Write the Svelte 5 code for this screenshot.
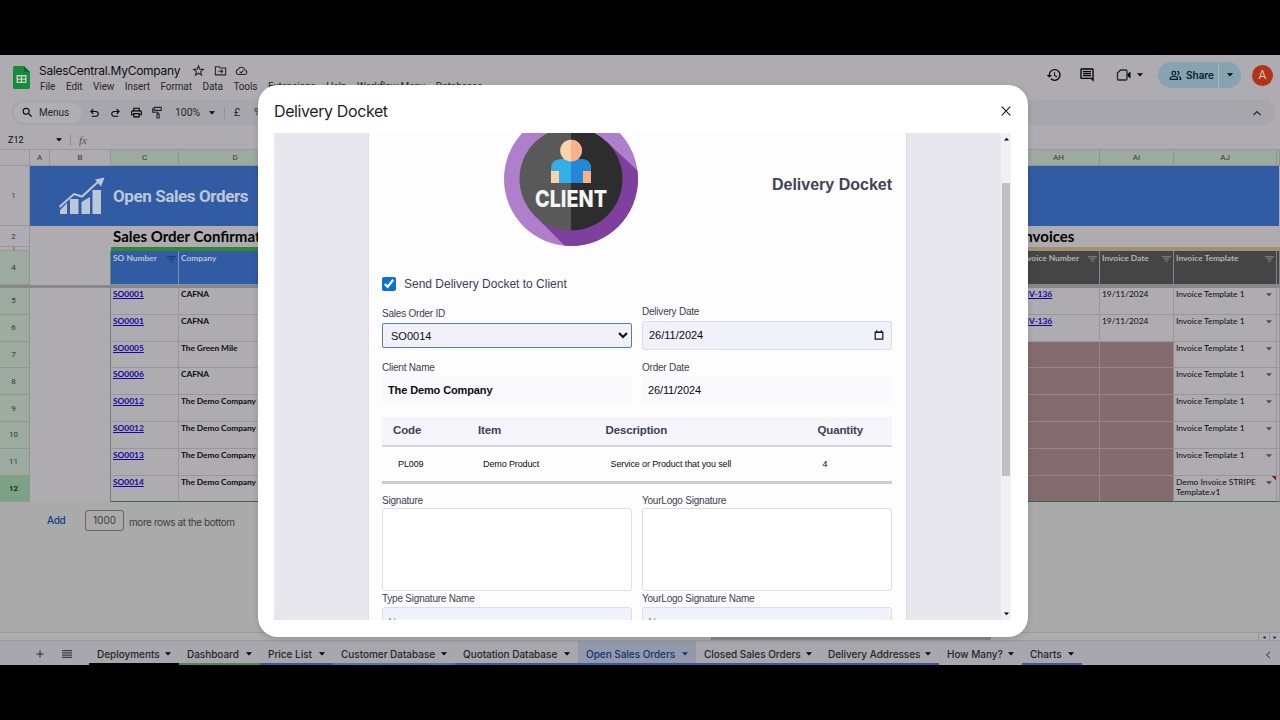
<script>
    let menus = ["File", "Edit", "View", "Insert", "Format", "Data", "Tools", "Extensions", "Help", "Workflow Menu", "Databases"];

    let orders = [
        { row: 5, so: "SO0001", company: "CAFNA", invoice: "INV-136", date: "19/11/2024", template: "Invoice Template 1" },
        { row: 6, so: "SO0001", company: "CAFNA", invoice: "INV-136", date: "19/11/2024", template: "Invoice Template 1" },
        { row: 7, so: "SO0005", company: "The Green Mile", template: "Invoice Template 1" },
        { row: 8, so: "SO0006", company: "CAFNA", template: "Invoice Template 1" },
        { row: 9, so: "SO0012", company: "The Demo Company", template: "Invoice Template 1" },
        { row: 10, so: "SO0012", company: "The Demo Company", template: "Invoice Template 1" },
        { row: 11, so: "SO0013", company: "The Demo Company", template: "Invoice Template 1" },
        { row: 12, so: "SO0014", company: "The Demo Company", template: "Demo Invoice STRIPE Template.v1" },
    ];

    let tabs = [
        { name: "Deployments", width: 90, color: "#000" },
        { name: "Dashboard", width: 81, color: "#4f8a55" },
        { name: "Price List", width: 73, color: "#3a5a9c" },
        { name: "Customer Database", width: 122, color: "#5277ad" },
        { name: "Quotation Database", width: 123, color: "#3a5a9c" },
        { name: "Open Sales Orders", width: 118, color: "#3a5a9c", active: true },
        { name: "Closed Sales Orders", width: 124, color: "#3a5a9c" },
        { name: "Delivery Addresses", width: 119, color: "#3a5a9c" },
        { name: "How Many?", width: 83, color: "transparent" },
        { name: "Charts", width: 60, color: "#3a5a9c" },
    ];

    let send_docket = true;
    let sales_order = "SO0014";
</script>

{#snippet caret()}
    <svg class="caret" viewBox="0 0 6 4"><path d="M0 .3h6L3 3.6z" /></svg>
{/snippet}

{#snippet filter()}
    <svg class="filter" viewBox="0 0 9 6"><path d="M0 .8h9M1.8 3h5.4M3.5 5.2h2" /></svg>
{/snippet}

<div class="screen">
    <div class="app">
        <header>
            <svg class="logo" viewBox="0 0 17 23">
                <path d="M1.500 0H11l6 6v15.500a1.500 1.500 0 0 1-1.500 1.500h-14A1.500 1.500 0 0 1 0 21.500v-20A1.500 1.500 0 0 1 1.500 0z" fill="#178a3c" />
                <path d="M11 0l6 6h-6z" fill="#0d6a2b" />
                <path d="M3.500 9h10v8h-10zM4.900 10.400v2h2.900v-2zM9.200 10.400v2h2.900v-2zM4.900 13.700v2h2.900v-2zM9.200 13.700v2h2.900v-2z" fill="#c3d3c6" fill-rule="evenodd" />
            </svg>
            <div class="doc">
                <div class="title">
                    <span>SalesCentral.MyCompany</span>
                    <svg class="line" viewBox="0 0 24 24"><path d="M12 3.500l2.500 6 6.500.5-5 4.200 1.600 6.300L12 17l-5.600 3.500L8 14.200 3 10l6.500-.5z" /></svg>
                    <svg class="line" viewBox="0 0 24 24"><path d="M2.500 5h7l2 2.500h10V20h-19zM8 13.500h7.500M13 10.500l3 3-3 3" /></svg>
                    <svg class="line" viewBox="0 0 24 24"><path d="M7 19.500a5 5 0 0 1-.8-9.900A6.300 6.300 0 0 1 18 11a4.300 4.300 0 0 1 .5 8.500zM8.500 14l2.500 2.500 4.500-4.500" /></svg>
                </div>
                <nav>
                    {#each menus as menu}
                        <span>{menu}</span>
                    {/each}
                </nav>
            </div>
            <div class="actions">
                <svg class="history" viewBox="0 0 24 24"><path d="M13 3a9 9 0 0 0-9 9H1l3.890 3.890.07.14L9 12H6c0-3.870 3.130-7 7-7s7 3.130 7 7-3.130 7-7 7c-1.930 0-3.680-.79-4.940-2.060l-1.420 1.420A8.954 8.954 0 0 0 13 21a9 9 0 0 0 0-18zm-1 5v5l4.280 2.540.72-1.210-3.500-2.080V8H12z" /></svg>
                <svg class="comment" viewBox="0 0 24 24"><path d="M22 4c0-1.100-.9-2-2-2H4c-1.100 0-2 .9-2 2v12c0 1.100.9 2 2 2h14l4 4zM20 4v13.170L18.830 16H4V4h16zM6 12h12v2H6zm0-3h12v2H6zm0-3h12v2H6z" /></svg>
                <svg class="meet" viewBox="0 0 16 14"><path class="outline" d="M4.500 2H10q1 0 1 1v8q0 1-1 1H2.500q-1 0-1-1V5z" /><path d="M11.500 6l3-2.500v7l-3-2.500z" /></svg>
                {@render caret()}
                <div class="share">
                    <svg viewBox="0 0 24 24"><path d="M9 4.500a3.500 3.500 0 1 0 0 7 3.500 3.500 0 0 0 0-7zM2.500 19v-2c0-2 4-3.200 6.500-3.200s6.500 1.200 6.500 3.200v2zM15 4.500a3.500 3.500 0 0 1 0 7M18 14c2 .7 3.500 1.700 3.500 3v2h-2.500" /></svg>
                    <span>Share</span>
                    <i></i>
                    {@render caret()}
                </div>
                <div class="avatar">A</div>
            </div>
        </header>

        <div class="toolbar">
            <div class="search">
                <svg viewBox="0 0 24 24"><path d="M15.500 14h-.79l-.28-.27A6.471 6.471 0 0 0 16 9.500 6.500 6.500 0 1 0 9.500 16c1.610 0 3.090-.59 4.230-1.570l.27.28v.79l5 4.990L20.490 19l-4.990-5zm-6 0C7.010 14 5 11.990 5 9.500S7.010 5 9.500 5 14 7.010 14 9.500 11.990 14 9.500 14z" /></svg>
                Menus
            </div>
            <div class="tools">
                <svg viewBox="0 0 24 24"><path d="M7 20v-2h7.100q1.575 0 2.738-1T18 14.500q0-1.500-1.162-2.500T14.100 11H7.800l2.600 2.600L9 15l-5-5 5-5 1.400 1.400L7.800 9h6.300q2.425 0 4.163 1.575T20 14.500q0 2.350-1.737 3.925T14.100 20z" /></svg>
                <svg class="flip" viewBox="0 0 24 24"><path d="M7 20v-2h7.100q1.575 0 2.738-1T18 14.500q0-1.500-1.162-2.500T14.100 11H7.800l2.600 2.600L9 15l-5-5 5-5 1.400 1.400L7.800 9h6.300q2.425 0 4.163 1.575T20 14.500q0 2.350-1.737 3.925T14.100 20z" /></svg>
                <svg viewBox="0 0 24 24"><path d="M19 8h-1V3H6v5H5c-1.660 0-3 1.340-3 3v6h4v4h12v-4h4v-6c0-1.660-1.340-3-3-3zM8 5h8v3H8V5zm8 12v2H8v-4h8v2zm2-2v-2H6v2H4v-4c0-.55.45-1 1-1h14c.55 0 1 .45 1 1v4h-2z" /></svg>
                <svg class="line" viewBox="0 0 24 24"><path d="M6 2.500h13v5.500H6zM6 5H3v6.500h10V15M11 15h4v7h-4z" /></svg>
            </div>
            <span class="zoom">100%</span>
            {@render caret()}
            <i></i>
            <span class="currency">£</span>
            <span>%</span>
            <svg class="fold" viewBox="0 0 10 8"><path d="M1.500 6L5 2.500 8.500 6" /></svg>
        </div>

        <div class="formula">
            <span class="cell_name">Z12</span>
            {@render caret()}
            <i></i>
            <em>fx</em>
        </div>

        <div class="sheet">
            <div class="pane left">
                <div class="row letters">
                    <span class="num"></span><span class="a">A</span><span class="b">B</span><span class="c sel">C</span><span class="d sel">D</span>
                </div>
                <div class="row banner">
                    <span class="num">1</span>
                    <div class="banner_fill">
                        <svg viewBox="0 0 46 38">
                            <path d="M1 37v-4l7-7v11zM11 22h8.500v15H11zM22.500 25l8.500-5v17h-8.500zM33.500 13H42v24h-8.500z" />
                            <path class="trend" d="M.5 30L15 17l8 2.500L40 4" />
                            <path d="M36 2.500L45.500.5 42 9.500z" />
                        </svg>
                        <b>Open Sales Orders</b>
                    </div>
                </div>
                <div class="row heading"><span class="num">2</span><b class="from_c">Sales Order Confirmations</b></div>
                <div class="row thin"><span class="num"><small>3</small></span><span class="strip green"></span></div>
                <div class="row columns">
                    <span class="num sel">4</span><span class="gap"></span>
                    <span class="c">SO Number {@render filter()}</span><span class="d">Company</span>
                </div>
                <div class="freeze"></div>
                {#each orders as order}
                    <div class="row order" class:last={order.row === 12}>
                        <span class="num sel" class:current={order.row === 12}>{order.row}</span><span class="gap"></span>
                        <span class="c"><a href="#so">{order.so}</a></span><b class="d">{order.company}</b>
                    </div>
                {/each}
                <div class="more"><span class="add">Add</span><span class="count">1000</span><span class="hint">more rows at the bottom</span></div>
            </div>

            <div class="pane right">
                <div class="row letters"><span class="ah sel">AH</span><span class="ai sel">AI</span><span class="aj sel">AJ</span><span class="end sel"></span></div>
                <div class="row banner"><div class="banner_fill"></div></div>
                <div class="row heading"><b>Invoices</b></div>
                <div class="row thin"><span class="strip tan"></span></div>
                <div class="row columns dark">
                    <span class="ah">Invoice Number {@render filter()}</span>
                    <span class="ai">Invoice Date {@render filter()}</span>
                    <span class="aj">Invoice Template {@render filter()}</span>
                    <span class="end"></span>
                </div>
                <div class="freeze"></div>
                {#each orders as order}
                    <div class="row order" class:last={order.row === 12}>
                        <span class="ah" class:missing={!order.invoice}>
                            {#if order.invoice}<a href="#inv">{order.invoice}</a>{/if}
                        </span>
                        <span class="ai" class:missing={!order.date}>{order.date ?? ""}</span>
                        <span class="aj" class:flagged={order.row === 12}>{order.template}{@render caret()}</span>
                        <span class="end"></span>
                    </div>
                {/each}
            </div>
        </div>

        <div class="hscroll"><span class="thumb"></span><span class="arrow">◂</span><span class="arrow">▸</span></div>

        <footer>
            <svg class="plus" viewBox="0 0 8 8"><path d="M4 .5v7M.5 4h7" /></svg>
            <svg class="list" viewBox="0 0 10 8"><path d="M0 .7h10M0 2.900h10M0 5.100h10M0 7.300h10" /></svg>
            {#each tabs as tab}
                <div class="tab" class:active={tab.active} style="width:{tab.width}px;border-color:{tab.color}">
                    {tab.name}
                    {@render caret()}
                </div>
            {/each}
            <svg class="side" viewBox="0 0 6 8"><path d="M5 .8L1.500 4 5 7.200" /></svg>
        </footer>
    </div>

    <div class="modal">
        <div class="modal_head">
            <h1>Delivery Docket</h1>
            <svg viewBox="0 0 10 10"><path d="M.7.7l8.600 8.600M9.300.7L.7 9.300" /></svg>
        </div>
        <div class="frame">
            <div class="paper">
                <div class="docket_head">
                    <svg class="client" viewBox="0 0 134 134">
                        <defs>
                            <clipPath id="disc"><circle cx="67" cy="67" r="67" /></clipPath>
                            <clipPath id="half"><path d="M67 0h67v134H67z" /></clipPath>
                        </defs>
                        <g clip-path="url(#disc)">
                            <path d="M0 0h134v134H0z" fill="#b07fcb" />
                            <path d="M103 30l31 29v75H61L30 103z" fill="#7f3f9f" />
                        </g>
                        <circle cx="67" cy="67" r="51.500" fill="#595959" />
                        <circle cx="67" cy="67" r="51.500" fill="#2d2d2d" clip-path="url(#half)" />
                        <path d="M47 57q0-10 10-10h20q10 0 10 10v14H47z" fill="#34aee4" />
                        <path d="M67 47h10q10 0 10 10v14H67z" fill="#2287d8" />
                        <path d="M47 59h8v12h-8z" fill="#fdd3aa" />
                        <path d="M79 59h8v12h-8z" fill="#fbb186" />
                        <circle cx="67" cy="38.500" r="10.800" fill="#fdd3aa" />
                        <circle cx="67" cy="38.500" r="10.800" fill="#fbb186" clip-path="url(#half)" />
                        <text x="67" y="95" text-anchor="middle" textLength="72" lengthAdjust="spacingAndGlyphs">CLIENT</text>
                    </svg>
                    <h2>Delivery Docket</h2>
                </div>

                <label class="send">
                    <input type="checkbox" bind:checked={send_docket} />
                    Send Delivery Docket to Client
                </label>

                <div class="fields">
                    <div class="field order_id">
                        <label for="so">Sales Order ID</label>
                        <select id="so" bind:value={sales_order}>
                            {#each ["SO0012", "SO0013", "SO0014"] as id}
                                <option>{id}</option>
                            {/each}
                        </select>
                    </div>
                    <div class="field">
                        <span class="label">Delivery Date</span>
                        <div class="date">
                            26/11/2024
                            <svg viewBox="0 0 10 10"><path d="M1.200 2h7.600v7.200H1.200zM1.200 2.500h7.600M2.700.3v1.500M7.300.3v1.500" /></svg>
                        </div>
                    </div>
                </div>

                <div class="fields second">
                    <div class="field">
                        <span class="label">Client Name</span>
                        <div class="value"><b>The Demo Company</b></div>
                    </div>
                    <div class="field">
                        <span class="label">Order Date</span>
                        <div class="value">26/11/2024</div>
                    </div>
                </div>

                <div class="items head"><span>Code</span><span>Item</span><span>Description</span><span>Quantity</span></div>
                <div class="items body"><span>PL009</span><span>Demo Product</span><span>Service or Product that you sell</span><span>4</span></div>

                <div class="fields signatures">
                    {#each [["Signature", "Type Signature Name"], ["YourLogo Signature", "YourLogo Signature Name"]] as [title, name_title]}
                        <div class="field">
                            <span class="label">{title}</span>
                            <div class="pad"></div>
                            <span class="label name_label">{name_title}</span>
                            <input class="name" placeholder="Name" />
                        </div>
                    {/each}
                </div>
            </div>
            <div class="vscroll">
                <svg viewBox="0 0 6 4"><path d="M0 3.700h6L3 .4z" /></svg>
                <div class="track"><div class="thumb"></div></div>
                {@render caret()}
            </div>
        </div>
    </div>
</div>

<style>
    :global(body) {
        background: #000;
    }
    .screen {
        position: relative;
        width: 1280px;
        height: 720px;
        padding: 55px 0;
        box-sizing: border-box;
        overflow: hidden;
        background: #000;
        font-family: Roboto, sans-serif;
    }
    .screen * {
        box-sizing: border-box;
    }
    .app {
        display: flex;
        flex-direction: column;
        height: 610px;
        overflow: hidden;
        background: #aeacb1;
        color: #26262a;
    }
    svg {
        flex: none;
    }
    .caret {
        width: 6px;
        height: 4px;
    }
    .line,
    .outline {
        fill: none;
        stroke: #26262a;
        stroke-width: 2;
    }
    i {
        width: 1px;
        height: 12px;
        background: #929197;
    }

    header {
        display: flex;
        height: 45px;
        padding-left: 13px;
        white-space: nowrap;
    }
    .logo {
        width: 17px;
        height: 23px;
        margin-top: 11px;
    }
    .doc {
        width: 600px;
        padding: 6px 0 0 9px;
    }
    .title {
        display: flex;
        align-items: center;
        height: 18px;
        font: 12px Inter, sans-serif;
        letter-spacing: -0.27px;
        color: #0e0e10;
    }
    .title span {
        width: 141px;
        margin-right: 12px;
    }
    .title svg {
        width: 13px;
        height: 13px;
        margin-right: 8.500px;
    }
    nav {
        display: flex;
        gap: 10.600px;
        padding-left: 1px;
        font-size: 10px;
        line-height: 16px;
        letter-spacing: -0.1px;
    }
    .actions {
        display: flex;
        align-items: center;
        height: 40px;
        margin-left: auto;
        padding-right: 7px;
    }
    .history {
        width: 16px;
        height: 16px;
        margin-right: 17px;
    }
    .comment {
        width: 16px;
        height: 16px;
        margin-right: 21px;
    }
    .meet {
        width: 16px;
        height: 14px;
        margin-right: 5px;
    }
    .meet .outline {
        stroke-width: 1.300;
    }
    .share {
        display: flex;
        align-items: center;
        width: 83px;
        height: 26px;
        margin: 0 11px 0 15px;
        padding-left: 11px;
        border-radius: 13px;
        background: #86a3b2;
        color: #0c1c2a;
        font: 600 10px Inter, sans-serif;
    }
    .share svg:first-child {
        width: 13px;
        height: 13px;
        margin-right: 4px;
        fill: none;
        stroke: #0c1c2a;
        stroke-width: 2.200;
    }
    .share span {
        width: 32px;
    }
    .share i {
        height: 26px;
        margin-right: 8px;
        background: #a4b3bc;
    }
    .avatar {
        width: 21px;
        height: 21px;
        border-radius: 50%;
        background: #b23316;
        color: #d0c8c8;
        font-size: 12px;
        line-height: 21px;
        text-align: center;
    }

    .toolbar {
        display: flex;
        align-items: center;
        height: 25px;
        margin: 0 5px 0 11px;
        padding: 0 13px 0 3px;
        border-radius: 12px;
        background: #a7a6ad;
        font-size: 10.500px;
    }
    .search {
        display: flex;
        align-items: center;
        width: 68px;
        height: 20px;
        gap: 5px;
        padding-left: 7px;
        border-radius: 10px;
        background: #afaeb3;
        font-size: 10px;
    }
    .search svg {
        width: 13px;
        height: 13px;
    }
    .tools {
        display: flex;
        gap: 8.300px;
        padding-left: 5.500px;
    }
    .tools svg {
        width: 13px;
        height: 13px;
    }
    .flip {
        transform: scaleX(-1);
    }
    .zoom {
        width: 34px;
        margin-left: 10.500px;
    }
    .toolbar i {
        margin: 0 9px;
    }
    .currency {
        width: 20px;
    }
    .fold {
        width: 10px;
        height: 8px;
        margin-left: auto;
        fill: none;
        stroke: #26262a;
        stroke-width: 1.200;
    }

    .formula {
        display: flex;
        align-items: center;
        height: 24px;
        padding: 5px 0 0 8px;
        font-size: 9px;
        color: #0e0e10;
    }
    .cell_name {
        width: 48px;
    }
    .formula i {
        margin: 0 8px;
    }
    .formula em {
        color: #55555a;
        font: italic 11px "Liberation Serif", serif;
    }

    .sheet {
        display: flex;
        justify-content: space-between;
        height: 483px;
        background: #aaa;
        font-family: Lato, sans-serif;
        font-size: 8.400px;
        color: #0c0c0e;
    }
    .left {
        width: 292px;
    }
    .right {
        width: 262px;
    }
    .row {
        display: flex;
        background: #aeacb1;
        white-space: nowrap;
    }
    .row > span,
    .row > b {
        flex: none;
        border-right: 1px solid #97969b;
        border-bottom: 1px solid #97969b;
    }
    .row .num {
        display: flex;
        align-items: center;
        justify-content: center;
        width: 30px;
        padding-right: 2px;
        overflow: hidden;
        color: #36363a;
        font: 8px Roboto, sans-serif;
    }
    .row .sel {
        background: #9caa9f;
        border-color: #8a998e;
    }
    .row .current {
        background: #7ca285;
        color: #12301b;
        font-weight: 700;
    }
    .a {
        width: 20px;
    }
    .b {
        width: 61px;
    }
    .c {
        width: 68px;
    }
    .d {
        width: 113px;
    }
    .gap {
        width: 81px;
    }
    .ah {
        width: 82px;
    }
    .ai {
        width: 74px;
    }
    .aj {
        width: 103px;
    }
    .end {
        width: 3px;
    }
    .letters {
        height: 17px;
        border-top: 1px solid #97969b;
        color: #36363a;
        font: 8px/16px Roboto, sans-serif;
        text-align: center;
    }
    .banner {
        height: 60px;
    }
    .banner_fill {
        display: flex;
        flex: 1;
        align-items: center;
        padding-left: 29px;
        background: #315ba3;
        color: #bcc7da;
        font: 17px Roboto, sans-serif;
        letter-spacing: -0.4px;
    }
    .right .banner_fill {
        margin-right: 1px;
    }
    .banner_fill svg {
        width: 46px;
        height: 38px;
        margin-right: 8px;
        fill: #bcc7da;
    }
    .banner_fill .trend {
        fill: none;
        stroke: #bcc7da;
        stroke-width: 2;
    }
    .heading {
        height: 21px;
        font-size: 15px;
        line-height: 21px;
        color: #000;
    }
    .heading b.from_c {
        padding-left: 83px;
    }
    .heading b {
        padding-left: 2px;
        border: 0;
    }
    .thin {
        height: 4px;
    }
    .thin .num {
        margin-right: 81px;
    }
    .thin small {
        font-size: 4px;
        line-height: 3px;
    }
    .row .strip {
        flex: 1;
        border: 0;
    }
    .green {
        background: #348436;
    }
    .tan {
        background: #a2906f;
    }
    .columns {
        height: 34px;
        color: #bac4d6;
        font-weight: 700;
    }
    .columns .c,
    .columns .d {
        padding: 2px 2px;
        background: #315ba3;
        border-color: #7f91b4;
    }
    .columns .c,
    .dark > span {
        display: flex;
        justify-content: space-between;
    }
    .dark > span {
        padding: 2px 2px;
        background: #454545;
        border-color: #85858a;
        color: #b4b4b8;
    }
    .dark .end {
        padding: 0;
    }
    .row .gap {
        border-bottom: 0;
        border-right: 1px solid #5f8d68;
    }
    .filter {
        width: 9px;
        height: 6px;
        margin-top: 3px;
        fill: none;
        stroke: #173763;
    }
    .dark .filter {
        stroke: #8d8d91;
    }
    .freeze {
        height: 3px;
        background: #88878a;
    }
    .order {
        height: 26.800px;
    }
    .order > span:not(.num),
    .order > b {
        padding: 1px 2px 0;
    }
    .order > b.d {
        letter-spacing: -0.08px;
    }
    .order > .end:not(.num) {
        padding: 0;
    }
    a {
        color: #1208a0;
        font-weight: 700;
        text-decoration: underline;
    }
    .order .missing {
        background: #846b6f;
        border-color: #998488;
    }
    .order > .aj:not(.num) {
        display: flex;
        justify-content: space-between;
        padding-right: 4px;
        white-space: normal;
    }
    .order .caret {
        margin-top: 4px;
        fill: #4e4e52;
    }
    .flagged {
        background: linear-gradient(45deg, transparent calc(100% - 3px), #a01818 0);
    }
    .last > :not(.num):not(.gap) {
        border-bottom-color: #2f6b3e;
    }
    .more {
        display: flex;
        align-items: center;
        height: 36px;
        padding-left: 47px;
        font: 10px Inter, sans-serif;
        color: #3d3d41;
        white-space: nowrap;
    }
    .more .add {
        width: 38px;
        color: #123f87;
        font-weight: 500;
        letter-spacing: -0.3px;
    }
    .count {
        width: 39px;
        height: 21px;
        margin-right: 5px;
        border: 1px solid #65656a;
        border-radius: 3px;
        line-height: 19px;
        text-align: center;
    }
    .hint {
        padding-top: 3px;
        letter-spacing: -0.42px;
    }

    .hscroll {
        display: flex;
        align-items: center;
        height: 9px;
        padding-left: 711px;
        background: #aeacb1;
        border-top: 1px solid #9b9a9e;
        border-bottom: 1px solid #9b9a9e;
    }
    .hscroll .thumb {
        width: 280px;
        height: 7px;
        margin-right: auto;
        background: #88878b;
    }
    .arrow {
        width: 11px;
        border-left: 1px solid #97969b;
        font: 6px/7px "DejaVu Sans", sans-serif;
        text-align: center;
    }

    footer {
        display: flex;
        flex: 1;
        align-items: center;
        background: #a8a7ad;
        font: 500 10px Inter, sans-serif;
    }
    .plus {
        width: 8px;
        height: 8px;
        margin: 2px 18px 0 36px;
    }
    .list {
        width: 10px;
        height: 8px;
        margin: 2px 17px 0 0;
    }
    .plus,
    .list,
    .side {
        fill: none;
        stroke: #26262a;
    }
    .tab {
        display: flex;
        flex: none;
        align-items: center;
        justify-content: space-between;
        height: 100%;
        padding: 4px 8px 0;
        border-bottom: 2px solid;
        letter-spacing: -0.03px;
        white-space: nowrap;
    }
    .tab.active {
        background: #9299ab;
        color: #0f3478;
    }
    .tab.active .caret {
        fill: #0f3478;
    }
    .side {
        width: 6px;
        height: 8px;
        margin: 3px 9px 0 auto;
    }

    .modal {
        position: absolute;
        left: 258px;
        top: 85px;
        width: 770px;
        height: 552px;
        padding: 0 17px 0 16px;
        border-radius: 20px;
        background: #fff;
        box-shadow: 0 2px 6px rgba(0, 0, 0, 0.15);
    }
    .modal_head {
        display: flex;
        align-items: center;
        justify-content: space-between;
        height: 48px;
        padding-top: 4px;
    }
    .modal_head svg {
        width: 10px;
        height: 10px;
        fill: none;
        stroke: #1f1f1f;
        stroke-width: 1.200;
    }
    h1 {
        margin: 0;
        font: 16px Inter, sans-serif;
        letter-spacing: -0.4px;
        color: #1f1f1f;
    }
    .frame {
        display: flex;
        height: 487px;
        padding-left: 95px;
        overflow: hidden;
        background: #e8e7ed;
        color: #3c4152;
        font-family: "Liberation Sans", Arial, sans-serif;
    }
    .paper {
        width: 537px;
        height: 700px;
        padding: 0 14px 0 13px;
        background: #fdfdfe;
        box-shadow: 0 0 2px rgba(0, 0, 0, 0.12);
    }
    .docket_head {
        display: flex;
        justify-content: space-between;
        height: 132px;
        padding-left: 122px;
    }
    .client {
        width: 134px;
        height: 134px;
        margin-top: -21.500px;
    }
    .client text {
        fill: #f4f4f4;
        font: 800 23.500px Inter, sans-serif;
    }
    h2 {
        margin: 43px 0 0;
        font-size: 16px;
        line-height: 18px;
        color: #3f4452;
    }
    .send {
        display: flex;
        align-items: center;
        height: 37px;
        font-size: 12px;
    }
    .send input {
        width: 14px;
        height: 14px;
        margin: 0 8px 0 0;
        accent-color: #0b6fde;
    }
    .fields {
        display: flex;
        gap: 10px;
        height: 48px;
    }
    .field {
        flex: 1;
        display: flex;
        flex-direction: column;
    }
    .field label,
    .label {
        height: 19px;
        font-size: 10px;
        letter-spacing: -0.22px;
        line-height: 19px;
    }
    .order_id {
        padding-top: 2px;
    }
    select {
        height: 25px;
        padding: 0 0 0 4px;
        border: 1px solid #54809f;
        border-radius: 2px;
        background: #eff2fa;
        color: #0c0c10;
        font: 11px "Liberation Sans", Arial, sans-serif;
    }
    .date {
        display: flex;
        align-items: center;
        justify-content: space-between;
        height: 29px;
        padding: 0 7px 2px 6px;
        border: 1px solid #dcdde8;
        border-radius: 2px;
        background: #f0f1fa;
        color: #0c0c10;
        font-size: 11px;
    }
    .date svg {
        width: 10px;
        height: 10px;
        fill: none;
        stroke: #111;
        stroke-width: 1.200;
    }
    .second {
        height: 46px;
        margin: 8px 0 13px;
    }
    .value {
        height: 27px;
        padding-left: 6px;
        background: #fafafe;
        color: #0c0c10;
        font-size: 11px;
        letter-spacing: -0.12px;
        line-height: 27px;
    }
    .items {
        display: grid;
        grid-template-columns: 85px 127.500px 212px 1fr;
        padding-left: 11px;
    }
    .head {
        height: 30px;
        border-bottom: 2px solid #d4d4e0;
        background: #f5f5fb;
        font-size: 11.500px;
        font-weight: 700;
        letter-spacing: -0.15px;
        line-height: 27px;
    }
    .body {
        height: 37px;
        padding-left: 16px;
        border-bottom: 3px solid #c9cdd3;
        color: #0c0c10;
        font-size: 9px;
        letter-spacing: -0.12px;
        line-height: 34px;
    }
    .signatures {
        height: auto;
        margin-top: 8px;
    }
    .signatures .label {
        height: 16px;
        line-height: 18px;
    }
    .signatures .name_label {
        line-height: 15px;
    }
    .pad {
        height: 83px;
        border: 1px solid #dddde2;
        border-radius: 3px;
        background: #fff;
    }
    .name {
        height: 29px;
        padding: 0 5px;
        border: 1px solid #dcdde8;
        border-radius: 3px;
        background: #f0f3fb;
        font: 11px "Liberation Sans", Arial, sans-serif;
    }
    .name::placeholder {
        color: #9a9ca6;
    }
    .vscroll {
        display: flex;
        flex-direction: column;
        align-items: center;
        width: 10px;
        margin-left: auto;
        padding: 4px 0;
        background: #f1f0f4;
    }
    .vscroll svg {
        width: 5px;
        height: 4px;
    }
    .track {
        flex: 1;
        width: 8px;
        padding-top: 42px;
    }
    .track .thumb {
        height: 293px;
        background: #c1c1c3;
    }
</style>
